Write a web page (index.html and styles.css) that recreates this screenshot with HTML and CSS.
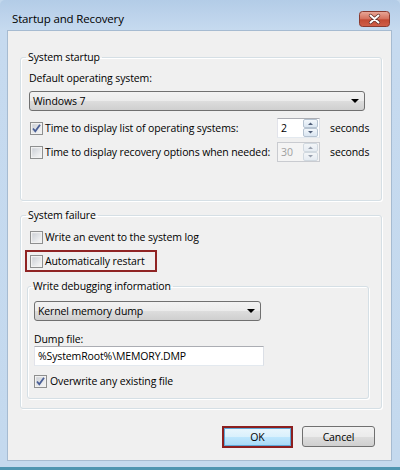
FILE: index.html
```html
<!DOCTYPE html>
<html>
<head>
<meta charset="utf-8">
<link rel="stylesheet" href="styles.css">
</head>
<body>
<div class="window">
  <div class="titlebar">
    <span class="title">Startup and Recovery</span>
    <svg class="close" width="31" height="16" viewBox="0 0 31 16">
      <defs>
        <linearGradient id="cg" x1="0" y1="0" x2="0" y2="1">
          <stop offset="0" stop-color="#e9a99a"/>
          <stop offset="0.5" stop-color="#d4705c"/>
          <stop offset="0.55" stop-color="#c24a33"/>
          <stop offset="1" stop-color="#d0604a"/>
        </linearGradient>
      </defs>
      <rect x="0.5" y="0.5" width="30" height="15" rx="3" fill="url(#cg)" stroke="#8a3b30"/>
      <path d="M11.5 4.5 L19.5 11.5 M19.5 4.5 L11.5 11.5" stroke="#5a2a25" stroke-width="3.4" stroke-linecap="round"/>
      <path d="M11.5 4.5 L19.5 11.5 M19.5 4.5 L11.5 11.5" stroke="#ffffff" stroke-width="2" stroke-linecap="round"/>
    </svg>
  </div>
  <div class="client">
    <fieldset class="group g1">
      <legend>System startup</legend>
      <div class="g1in">
        <div class="label">Default operating system:</div>
        <div class="select os"><span>Windows 7</span><span class="arrow"></span></div>
        <div class="row r1">
          <div class="chklabel">
            <svg class="chk" width="13" height="13" viewBox="0 0 13 13"><use href="#box"/><path d="M3 6.5 L5.3 9.3 L10 2.8" fill="none" stroke="#4a5f96" stroke-width="1.8"/></svg>
            <span>Time to display list of operating systems:</span>
          </div>
          <div class="spin"><span class="val">2</span>
            <svg class="arrows" width="15" height="18" viewBox="0 0 15 18"><use href="#arr"/></svg>
          </div>
          <span class="unit">seconds</span>
        </div>
        <div class="row r2">
          <div class="chklabel">
            <svg class="chk" width="13" height="13" viewBox="0 0 13 13"><use href="#box"/></svg>
            <span>Time to display recovery options when needed:</span>
          </div>
          <div class="spin disabled"><span class="val">30</span>
            <svg class="arrows" width="15" height="18" viewBox="0 0 15 18"><use href="#arr"/></svg>
          </div>
          <span class="unit">seconds</span>
        </div>
      </div>
    </fieldset>

    <fieldset class="group g2">
      <legend>System failure</legend>
      <div class="g2in">
        <div class="line ev">
          <svg class="chk" width="13" height="13" viewBox="0 0 13 13"><use href="#box"/></svg>
          <span>Write an event to the system log</span>
        </div>
        <div class="redbox">
          <svg class="chk" width="13" height="13" viewBox="0 0 13 13"><use href="#box"/></svg>
          <span>Automatically restart</span>
        </div>
        <fieldset class="group g3">
          <legend>Write debugging information</legend>
          <div class="g3in">
            <div class="select kd"><span>Kernel memory dump</span><span class="arrow"></span></div>
            <div class="label dump">Dump file:</div>
            <div class="textbox">%SystemRoot%\MEMORY.DMP</div>
            <div class="line ow">
              <svg class="chk" width="13" height="13" viewBox="0 0 13 13"><use href="#box"/><path d="M3 6.5 L5.3 9.3 L10 2.8" fill="none" stroke="#4a5f96" stroke-width="1.8"/></svg>
              <span>Overwrite any existing file</span>
            </div>
          </div>
        </fieldset>
      </div>
    </fieldset>

    <div class="buttons">
      <div class="btn ok">OK</div>
      <div class="btn cancel">Cancel</div>
    </div>
  </div>
</div>

<svg width="0" height="0" class="defs">
  <defs>
    <linearGradient id="bg" x1="0" y1="0" x2="1" y2="1">
      <stop offset="0" stop-color="#cbcfd5"/>
      <stop offset="1" stop-color="#f7f7f7"/>
    </linearGradient>
    <linearGradient id="ag" x1="0" y1="0" x2="0" y2="1">
      <stop offset="0" stop-color="#f4f8fc"/>
      <stop offset="1" stop-color="#d8e4f0"/>
    </linearGradient>
    <g id="box">
      <rect x="0.5" y="0.5" width="12" height="12" fill="#f4f4f4" stroke="#8e8f8f"/>
      <rect x="2" y="2" width="9" height="9" fill="url(#bg)" stroke="#ececec" stroke-width="0.6"/>
    </g>
    <g id="arr">
      <rect x="0.5" y="0.5" width="14" height="8" rx="1.5" fill="url(#ag)" stroke="#b6c3d1"/>
      <rect x="0.5" y="9.5" width="14" height="8" rx="1.5" fill="url(#ag)" stroke="#b6c3d1"/>
      <path d="M5 6 L7.5 3.5 L10 6 Z" fill="#4f5e78"/>
      <path d="M5 12 L7.5 14.5 L10 12 Z" fill="#4f5e78"/>
    </g>
  </defs>
</svg>
</body>
</html>
```

FILE: styles.css
```css
* {
  box-sizing: border-box;
}

html, body {
  margin: 0;
  padding: 0;
}

body {
  width: 400px;
  height: 470px;
  overflow: hidden;
  background: #c3d8ed;
  font-family: "Open Sans", "Noto Sans", sans-serif;
  font-size: 10.5px;
  letter-spacing: -0.12px;
  color: #000;
}

.defs {
  position: absolute;
  width: 0;
  height: 0;
}

.window {
  height: 470px;
  display: flex;
  flex-direction: column;
  background: linear-gradient(#b3cce7 0px, #c6daef 30px, #c4d9ee 100%);
  border-bottom: 3px solid #4f95b1;
  border-top-left-radius: 5px;
  border-top-right-radius: 5px;
}

.titlebar {
  height: 30px;
  display: flex;
  justify-content: space-between;
  align-items: flex-start;
  padding: 0 10px 0 12px;
  flex: none;
}

.title {
  font-size: 11.5px;
  letter-spacing: -0.15px;
  line-height: 16px;
  margin-top: 11px;
}

.close {
  display: block;
  margin-top: 11px;
}

.client {
  margin: 0 8px 0 7px;
  height: 431px;
  flex: none;
  background: #f0f0f0;
  border: 1px solid #a6bbd1;
  display: flex;
  flex-direction: column;
}

.group {
  margin: 0;
  padding: 0;
  min-inline-size: 0;
  border: 1px solid #d5dfe5;
  border-radius: 3px;
  box-shadow: inset 1px 1px 0 #ffffff, 1px 1px 0 #ffffff;
}

.group legend {
  padding: 0 2px;
  margin-left: 5px;
  line-height: 16px;
}

.g1 {
  margin: 18px 9px 0 12px;
}

.g1in {
  padding: 5px 0 38px 8px;
}

.label {
  line-height: 16px;
}

.select {
  height: 20px;
  display: flex;
  align-items: center;
  justify-content: space-between;
  padding: 0 4px 0 3px;
  border: 1px solid #707070;
  border-radius: 3px;
  background: linear-gradient(#f2f2f2 0%, #ebebeb 50%, #dddddd 51%, #cfcfcf 100%);
}

.select.os {
  margin-top: 5px;
  width: 336px;
}

.arrow {
  width: 0;
  height: 0;
  border-left: 4px solid transparent;
  border-right: 4px solid transparent;
  border-top: 4px solid #000;
  margin-right: 1px;
}

.row {
  display: flex;
  align-items: center;
  height: 20px;
}

.r1 {
  margin-top: 7px;
}

.r2 {
  margin-top: 4px;
}

.chklabel {
  width: 248px;
  display: flex;
  align-items: center;
  gap: 2px;
  padding-left: 1px;
}

.chk {
  display: block;
  flex: none;
}

.spin {
  width: 43px;
  height: 20px;
  display: flex;
  align-items: center;
  justify-content: space-between;
  padding: 0 1px 0 3px;
  background: #fff;
  border: 1px solid #abadb3;
  border-left-color: #e2e3ea;
  border-right-color: #dbdfe6;
  border-bottom-color: #e3e9ef;
}

.spin .arrows {
  display: block;
}

.spin.disabled {
  background: #f4f4f4;
  border-color: #c9cbd0;
  color: #a0a0a0;
}

.spin.disabled .arrows {
  opacity: 0.55;
}

.unit {
  margin-left: 10px;
}

.g2 {
  margin: 6px 9px 0 12px;
}

.g2in {
  padding: 6px 12px 9px 6px;
}

.line {
  display: flex;
  align-items: center;
  line-height: 16px;
}

.ev {
  margin-left: 3px;
  gap: 2px;
}

.redbox {
  margin-top: 5px;
  margin-left: -2px;
  width: 132px;
  display: flex;
  align-items: center;
  gap: 2px;
  border: 2px solid #902424;
  padding: 1px 0 1px 3px;
  line-height: 16px;
}

.g3 {
  margin-top: 6px;
}

.g3 legend {
  margin-left: 3px;
}

.g3in {
  padding: 7px 8px 9px 6px;
}

.select.kd {
  width: 227px;
}

.dump {
  margin-top: 11px;
  line-height: 14px;
}

.textbox {
  width: 230px;
  height: 20px;
  line-height: 18px;
  padding-left: 3px;
  background: #fff;
  border: 1px solid #abadb3;
  border-left-color: #e2e3ea;
  border-right-color: #dbdfe6;
  border-bottom-color: #e3e9ef;
}

.ow {
  margin-top: 7px;
  gap: 3px;
}

.buttons {
  display: flex;
  justify-content: flex-end;
  gap: 9px;
  margin-top: 17px;
  padding-right: 16px;
}

.btn {
  display: flex;
  align-items: center;
  justify-content: center;
}

.ok {
  width: 71px;
  height: 22px;
  border: 2px solid #8c1f1f;
  background: linear-gradient(#eaf6fd 0%, #d9f0fc 50%, #bee6fd 51%, #a7d9f5 100%);
  box-shadow: inset 0 0 0 1px #5fa7d6;
}

.cancel {
  width: 73px;
  height: 21px;
  border: 1px solid #707070;
  border-radius: 3px;
  background: linear-gradient(#f2f2f2 0%, #ebebeb 50%, #dddddd 51%, #cfcfcf 100%);
}
```
